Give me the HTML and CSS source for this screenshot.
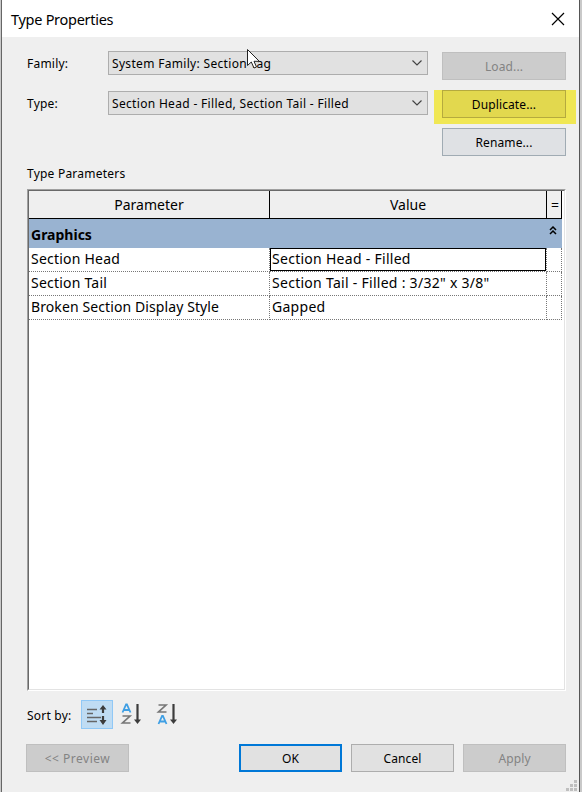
FILE: index.html
```html
<!DOCTYPE html>
<html lang="en">
<head>
<meta charset="utf-8">
<title>Type Properties</title>
<link rel="stylesheet" href="styles.css">
</head>
<body>
<main class="dialog">
  <header class="titlebar">
    <h1>Type Properties</h1>
    <svg class="close" width="14" height="14" viewBox="0 0 14 14"><path d="M1 1L13 13M13 1L1 13"/></svg>
  </header>
  <section class="top">
    <div class="fields">
      <div class="field"><label>Family:</label>
        <div class="combo"><span>System Family: Section Tag</span><svg width="12" height="8" viewBox="0 0 12 8"><path d="M1.500 1.500L6 6L10.500 1.500"/></svg></div></div>
      <div class="field"><label>Type:</label>
        <div class="combo"><span>Section Head - Filled, Section Tail - Filled</span><svg width="12" height="8" viewBox="0 0 12 8"><path d="M1.500 1.500L6 6L10.500 1.500"/></svg></div></div>
    </div>
    <div class="actions">
      <button class="btn disabled">Load...</button>
      <div class="mark"><button class="btn dup">Duplicate...</button></div>
      <button class="btn rename">Rename...</button>
    </div>
  </section>
  <h2>Type Parameters</h2>
  <section class="frame">
    <div class="inner">
      <div class="row head"><div>Parameter</div><div>Value</div><div class="eq">=</div></div>
      <div class="group"><span>Graphics</span><svg width="8" height="9" viewBox="0 0 8 9"><path d="M1 4L4 1L7 4M1 8L4 5L7 8"/></svg></div>
      <div class="row"><div>Section Head</div><div class="value selected"><div class="box">Section Head - Filled</div></div><div></div></div>
      <div class="row"><div>Section Tail</div><div class="value">Section Tail - Filled : 3/32" x 3/8"</div><div></div></div>
      <div class="row"><div class="long">Broken Section Display Style</div><div class="value">Gapped</div><div></div></div>
    </div>
  </section>
  <section class="sort">
    <span class="caption">Sort by:</span>
    <div class="tool on"><svg width="32" height="29" viewBox="0 0 32 29"><path class="bars" d="M6 9.500H16M6 13.500H12M6 17.500H20M6 21.500H16"/><path class="arr" d="M22 7V13M22 16V23"/><path class="tip" d="M18.500 9.500L22 5L25.500 9.500ZM18.500 20L22 25L25.500 20Z"/></svg></div>
    <div class="tool"><svg width="32" height="29" viewBox="0 0 32 29"><path class="a" d="M5.500 12.500L9.100 4.500H9.900L13.500 12.500M7 10H12"/><path class="z" d="M5.500 16H13L5.500 23H13.500"/><path class="arr thin" d="M20.500 4V21"/><path class="tip" d="M17 19.500H24L20.500 24Z"/></svg></div>
    <div class="tool"><svg width="32" height="29" viewBox="0 0 32 29"><path class="z" d="M5.500 5H13L5.500 12H13.500"/><path class="a" d="M5.500 24L9.100 16H9.900L13.500 24M7 21.500H12"/><path class="arr thin" d="M20.500 4V21"/><path class="tip" d="M17 19.500H24L20.500 24Z"/></svg></div>
  </section>
  <footer>
    <button class="btn disabled preview">&lt;&lt; Preview</button>
    <button class="btn ok">OK</button>
    <button class="btn">Cancel</button>
    <button class="btn disabled">Apply</button>
  </footer>
  <svg class="grip" width="12" height="12" viewBox="0 0 12 12"><path d="M8 0h3v3h-3zM8 4h3v3h-3zM4 4h3v3h-3zM8 8h3v3h-3zM4 8h3v3h-3zM0 8h3v3h-3z"/></svg>
  <svg class="cursor" width="14" height="21" viewBox="0 0 14 21"><path d="M.5.500V16.500L4.300 13L7 19L9.500 18L7 12.300H12.300Z"/></svg>
</main>
</body>
</html>
```
FILE: styles.css
```css
* { box-sizing: border-box; }
body { margin: 0; background: #c9c9c9; font: 12px/16px "Noto Sans", sans-serif; letter-spacing: .22px; color: #000; overflow: hidden; }
.dialog { position: relative; box-sizing: content-box; width: 577px; height: 792px; margin-left: 1px; border-left: 1px solid #666; border-right: 1px solid #555; background: #efefef; }
h1, h2 { margin: 0; font-weight: 400; }
.titlebar { display: flex; justify-content: space-between; align-items: center; height: 37px; padding: 0 14px 0 9px; background: #fff; }
h1 { font-size: 14.5px; letter-spacing: -.28px; }
svg { display: block; fill: none; stroke: #222; }
.close { stroke: #000; stroke-width: 1.2; }
.top { display: flex; justify-content: space-between; height: 126px; padding: 14px 13px 0 25px; }
.fields { display: grid; gap: 16px; align-content: start; }
.field { display: grid; grid-template-columns: 81px 320px; align-items: center; }
.field label { padding-top: 2px; }
.combo { display: flex; align-items: center; justify-content: space-between; height: 24px; padding: 0 4px 0 3px; border: 1px solid #adadad; background: #e1e1e1; white-space: nowrap; letter-spacing: .32px; }
.combo span { padding-top: 2px; }
.combo svg { stroke: #444; stroke-width: 1.2; }
.actions { padding-top: 1px; }
.actions .btn { width: 124px; }
.btn { display: flex; align-items: center; justify-content: center; width: 103px; height: 28px; padding: 2px 0 0; border: 1px solid #adadad; background: #e1e1e1; font: inherit; letter-spacing: .12px; color: #000; }
.btn.disabled { border-color: #bfbfbf; background: #ccc; color: #838383; }
.mark { height: 34px; margin: 10px -10px 4px -8px; padding-left: 8px; background: #f0e754; }
.btn.dup { border-color: #b5aa3e; background: #e2d84e; }
.btn.rename { border-color: #a0abb3; background: #dfe1e4; }
h2 { height: 26px; padding: 3px 0 0 25px; font-size: 12px; }
.frame { width: 539px; height: 502px; margin-left: 25px; border: 1px solid; border-color: #a0a0a0 #fff #fff #a0a0a0; }
.inner { height: 500px; padding-right: 2px; border: 1px solid; border-color: #696969 #e3e3e3 #e3e3e3 #696969; background: #fff; font-size: 14px; }
.row { display: grid; grid-template-columns: 241px 277px 15px; height: 24px; line-height: 22px; }
.row > div { padding-left: 2px; border-right: 1px dotted #777; border-bottom: 1px dotted #777; white-space: nowrap; }
.row > .value { letter-spacing: .28px; }
.row > .long { letter-spacing: .1px; }
.row > .selected { padding: 0; }
.box { height: 23px; padding-left: 1px; border: 1px solid #000; line-height: 20px; }
.row.head { height: 28px; line-height: 27px; letter-spacing: 0; text-align: center; background: #efefef; }
.row.head > div { padding: 0; border-right: 1px solid #000; border-bottom: 1px solid #000; }
.row.head > .eq { padding-left: 2px; }
.group { display: flex; justify-content: space-between; height: 29px; padding: 0 5px 0 2px; background: #99b3d1; font-weight: 700; line-height: 31px; letter-spacing: 0; }
.group svg { margin-top: 7px; stroke: #000; stroke-width: 1.5; }
.sort { display: flex; align-items: center; height: 29px; margin: 9px 0 15px 25px; }
.caption { width: 54px; padding-top: 2px; }
.tool { width: 32px; height: 29px; margin-right: 4px; }
.tool.on { background: #bfdcf3; outline: 1px solid #90c8f6; outline-offset: -1px; }
.bars { stroke: #666; stroke-width: 1.6; }
.arr { stroke: #3c3c3c; stroke-width: 2.2; }
.tip { fill: #3c3c3c; stroke: none; }
.a { stroke: #3f9fe4; stroke-width: 1.8; }
.z { stroke: #777; stroke-width: 1.7; }
footer { display: flex; gap: 9px; padding-left: 24px; }
.preview { margin-right: 101px; letter-spacing: .5px; }
.btn.ok { border: 2px solid #0078d7; }
.grip { position: absolute; right: 1px; bottom: 0; fill: #bfbfbf; stroke: none; }
.cursor { position: absolute; left: 245px; top: 49px; fill: #fff; stroke: #222; }
```
